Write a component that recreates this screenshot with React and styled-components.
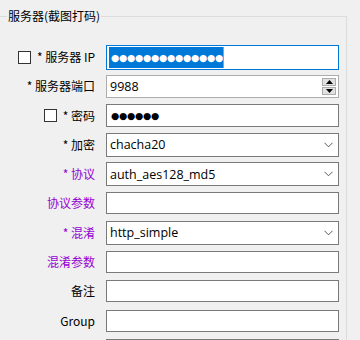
import React from 'react'
import styled, { createGlobalStyle } from 'styled-components'

const GlobalStyle = createGlobalStyle`
  html, body {
    margin: 0;
    padding: 0;
    background: #f0f0f0;
  }
  body {
    font-family: "Noto Sans CJK SC", "Noto Sans", sans-serif;
    color: #000;
  }
`

const Page = styled.div`
  width: 360px;
  height: 340px;
  overflow: hidden;
  background: #f0f0f0;
`

const Group = styled.fieldset`
  margin: 8px 0 0 -2px;
  width: 349px;
  height: 360px;
  box-sizing: border-box;
  border: 1px solid #dcdcdc;
  padding: 21px 8px 0 1px;
  min-width: 0;
`

const Legend = styled.legend`
  margin-left: 7px;
  padding: 0 1px;
  font-size: 12px;
  line-height: 16px;
  color: #000;
`

const Form = styled.div`
  display: flex;
  flex-direction: column;
  gap: 5.3px;
`

const Row = styled.div`
  display: flex;
  align-items: center;
  height: 24px;
  gap: 11px;
`

const Label = styled.div`
  width: 95px;
  flex: none;
  display: flex;
  align-items: center;
  justify-content: flex-end;
  gap: 6px;
  font-size: 12px;
  line-height: 16px;
  white-space: nowrap;
  color: ${p => (p.$accent ? '#9400d3' : '#000')};
`

const Check = styled.span`
  width: 11px;
  height: 11px;
  border: 1px solid #333;
  background: #fff;
  flex: none;
`

const Box = styled.div`
  width: 233px;
  height: ${p => p.$h || 22}px;
  box-sizing: border-box;
  flex: none;
  display: flex;
  align-items: center;
  background: #fff;
  border: 1px solid ${p => (p.$focus ? '#0078d7' : p.$soft ? '#adadad' : '#7a7a7a')};
  padding: 0 2px 0 2px;
  font-family: "Open Sans", "Noto Sans", sans-serif;
  font-size: 12.5px;
  color: #000;
`

const Value = styled.span`
  flex: 1;
  white-space: nowrap;
  overflow: hidden;
  padding-left: 1px;
`

const Selected = styled.span`
  display: flex;
  align-items: center;
  height: 21px;
  margin-top: 1px;
  background: #0078d7;
  color: #fff;
  border-right: 1px solid #ff8c00;
`

const Dots = styled.span`
  display: flex;
  align-items: center;
  padding-left: ${p => (p.$pad ? 2 : 0)}px;
`

const Dot = styled.span`
  width: 8px;
  text-align: center;
  font-family: "DejaVu Sans", sans-serif;
  font-size: 9.5px;
  line-height: 12px;
`

const Spinner = styled.div`
  display: flex;
  flex-direction: column;
  gap: 1px;
`

const SpinButton = styled.div`
  width: 14px;
  height: 8px;
  box-sizing: border-box;
  background: #e1e1e1;
  border: 1px solid #adadad;
  display: flex;
  align-items: center;
  justify-content: center;
`

const Chevron = styled.svg`
  flex: none;
  margin-right: 3px;
`

const dots = (n, pad) => (
  <Dots $pad={pad}>
    {Array.from({ length: n }, (_, i) => <Dot key={i}>●</Dot>)}
  </Dots>
)

const Select = ({ value }) => (
  <Box $h={24}>
    <Value>{value}</Value>
    <Chevron width="9" height="6" viewBox="0 0 9 6">
      <path d="M0.5 0.8 L4.5 4.8 L8.5 0.8" fill="none" stroke="#5a5a5a" strokeWidth="1" />
    </Chevron>
  </Box>
)

const Field = ({ value }) => (
  <Box>
    <Value>{value}</Value>
  </Box>
)

export default function App() {
  return (
    <Page>
      <GlobalStyle />
      <Group>
        <Legend>服务器(截图打码)</Legend>
        <Form>
          <Row>
            <Label><Check />* 服务器 IP</Label>
            <Box $focus $h={25}>
              <Selected>{dots(14, true)}</Selected>
            </Box>
          </Row>
          <Row>
            <Label>* 服务器端口</Label>
            <Box $soft $h={23}>
              <Value>9988</Value>
              <Spinner>
                <SpinButton>
                  <svg width="7" height="4" viewBox="0 0 7 4"><path d="M3.5 0 L7 4 L0 4 Z" fill="#000" /></svg>
                </SpinButton>
                <SpinButton>
                  <svg width="7" height="4" viewBox="0 0 7 4"><path d="M0 0 L7 0 L3.5 4 Z" fill="#000" /></svg>
                </SpinButton>
              </Spinner>
            </Box>
          </Row>
          <Row>
            <Label><Check />* 密码</Label>
            <Box $h={23}>{dots(6, true)}</Box>
          </Row>
          <Row>
            <Label>* 加密</Label>
            <Select value="chacha20" />
          </Row>
          <Row>
            <Label $accent>* 协议</Label>
            <Select value="auth_aes128_md5" />
          </Row>
          <Row>
            <Label $accent>协议参数</Label>
            <Field value="" />
          </Row>
          <Row>
            <Label $accent>* 混淆</Label>
            <Select value="http_simple" />
          </Row>
          <Row>
            <Label $accent>混淆参数</Label>
            <Field value="" />
          </Row>
          <Row>
            <Label>备注</Label>
            <Field value="" />
          </Row>
          <Row>
            <Label>Group</Label>
            <Field value="" />
          </Row>
          <Row>
            <Label />
            <Field value="" />
          </Row>
        </Form>
      </Group>
    </Page>
  )
}
